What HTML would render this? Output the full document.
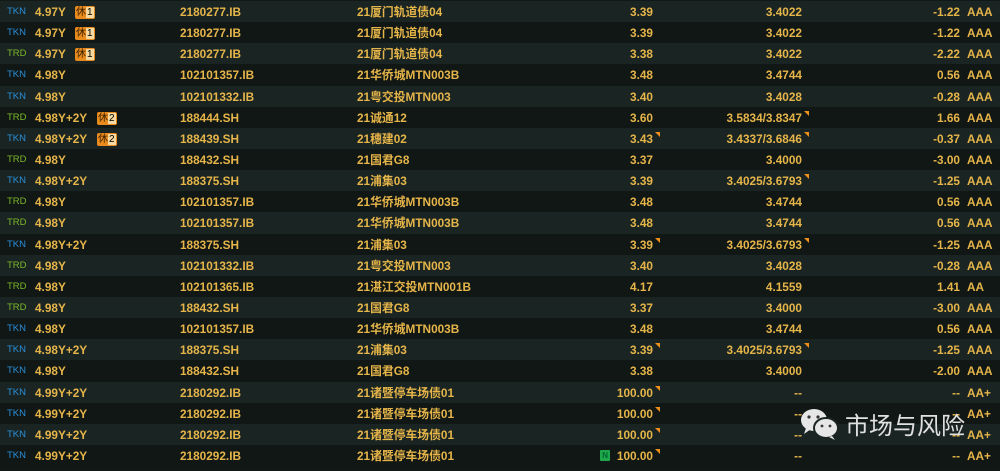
<!DOCTYPE html>
<html><head><meta charset="utf-8"><style>
body{margin:0;width:1000px;height:470px;overflow:hidden;background:#121816;font-family:"Liberation Sans","Noto Sans CJK SC",sans-serif;}
#t{margin-top:1px}
.r{position:relative;height:21.15px;font-size:11.8px;font-weight:bold;color:#e6b54a;line-height:22px;}
.r:nth-child(odd){background:#1a2523}
.r:nth-child(even){background:#111715}
.r span{position:absolute;white-space:nowrap}
.t{left:7px;font-size:9.5px;font-weight:normal}
.k{color:#2a8fda}.d{color:#7ab829}
.m{left:35px}
.b{background:#e88a1c;color:#3a2000;font-size:10px;line-height:13px;top:5px;padding:0 1px;border-radius:2px;font-weight:normal}
.b i{font-style:normal;background:#f5d9a0;padding:0 1px;color:#000}
.c{left:180px}.n{left:357px}
.p{right:347px}.v{right:198px}.g{right:40px}.a{left:967px}
.f:after{content:"";position:absolute;right:-7px;top:4px;border-top:5px solid #f0901c;border-left:5px solid transparent}
.wm{position:absolute;color:#e0e0e0;font-size:24px;font-family:"Noto Sans CJK SC",sans-serif}
</style></head><body>
<div id="t"></div>
<svg style="position:absolute;left:799px;top:407px" width="40" height="34" viewBox="0 0 40 34"><ellipse cx="15" cy="13" rx="13" ry="11" fill="#e6e6e6"/><path d="M7 21 L5 27 L12 22Z" fill="#e6e6e6"/><ellipse cx="27" cy="21" rx="12" ry="10" fill="#e6e6e6" stroke="#1a2523" stroke-width="2"/><path d="M33 29 L36 33 L30 30Z" fill="#e6e6e6"/><circle cx="10" cy="10" r="1.6" fill="#333"/><circle cx="19" cy="10" r="1.6" fill="#333"/><circle cx="23" cy="19" r="1.4" fill="#333"/><circle cx="31" cy="19" r="1.4" fill="#333"/></svg>
<div class="wm" style="left:845px;top:406px">市场与风险</div>
<script>
var rows=[
["k","4.97Y","1","2180277.IB","21厦门轨道债04","3.39",0,"3.4022",0,"-1.22","AAA"],
["k","4.97Y","1","2180277.IB","21厦门轨道债04","3.39",0,"3.4022",0,"-1.22","AAA"],
["d","4.97Y","1","2180277.IB","21厦门轨道债04","3.38",0,"3.4022",0,"-2.22","AAA"],
["k","4.98Y","","102101357.IB","21华侨城MTN003B","3.48",0,"3.4744",0,"0.56","AAA"],
["k","4.98Y","","102101332.IB","21粤交投MTN003","3.40",0,"3.4028",0,"-0.28","AAA"],
["d","4.98Y+2Y","2","188444.SH","21诚通12","3.60",0,"3.5834/3.8347",1,"1.66","AAA"],
["k","4.98Y+2Y","2","188439.SH","21穗建02","3.43",1,"3.4337/3.6846",1,"-0.37","AAA"],
["d","4.98Y","","188432.SH","21国君G8","3.37",0,"3.4000",0,"-3.00","AAA"],
["k","4.98Y+2Y","","188375.SH","21浦集03","3.39",0,"3.4025/3.6793",1,"-1.25","AAA"],
["d","4.98Y","","102101357.IB","21华侨城MTN003B","3.48",0,"3.4744",0,"0.56","AAA"],
["d","4.98Y","","102101357.IB","21华侨城MTN003B","3.48",0,"3.4744",0,"0.56","AAA"],
["k","4.98Y+2Y","","188375.SH","21浦集03","3.39",1,"3.4025/3.6793",1,"-1.25","AAA"],
["d","4.98Y","","102101332.IB","21粤交投MTN003","3.40",0,"3.4028",0,"-0.28","AAA"],
["d","4.98Y","","102101365.IB","21湛江交投MTN001B","4.17",0,"4.1559",0,"1.41","AA"],
["d","4.98Y","","188432.SH","21国君G8","3.37",0,"3.4000",0,"-3.00","AAA"],
["k","4.98Y","","102101357.IB","21华侨城MTN003B","3.48",0,"3.4744",0,"0.56","AAA"],
["k","4.98Y+2Y","","188375.SH","21浦集03","3.39",1,"3.4025/3.6793",1,"-1.25","AAA"],
["k","4.98Y","","188432.SH","21国君G8","3.38",0,"3.4000",0,"-2.00","AAA"],
["k","4.99Y+2Y","","2180292.IB","21诸暨停车场债01","100.00",1,"--",0,"--","AA+"],
["k","4.99Y+2Y","","2180292.IB","21诸暨停车场债01","100.00",1,"--",0,"--","AA+"],
["k","4.99Y+2Y","","2180292.IB","21诸暨停车场债01","100.00",1,"--",0,"--","AA+"],
["k","4.99Y+2Y","","2180292.IB","21诸暨停车场债01","100.00",1,"--",0,"--","AA+"]];
var h="";rows.forEach(function(r,i){
var bl=r[2]?'<span class="b" style="left:'+(r[1].length>5?97:75)+'px">休<i>'+r[2]+'</i></span>':'';
var nb=i==21?'<span style="right:390px;top:5px;background:#1fa84a;color:#063;font-size:8px;line-height:11px;padding:0 2px;border-radius:1px">N</span>':'';
h+='<div class="r"><span class="t '+r[0]+'">'+(r[0]=="k"?"TKN":"TRD")+'</span><span class="m">'+r[1]+'</span>'+bl+'<span class="c">'+r[3]+'</span><span class="n">'+r[4]+'</span>'+nb+'<span class="p'+(r[6]?' f':'')+'">'+r[5]+'</span><span class="v'+(r[8]?' f':'')+'">'+r[7]+'</span><span class="g">'+r[9]+'</span><span class="a">'+r[10]+'</span></div>';});
document.getElementById("t").innerHTML=h;
</script>
</body></html>
